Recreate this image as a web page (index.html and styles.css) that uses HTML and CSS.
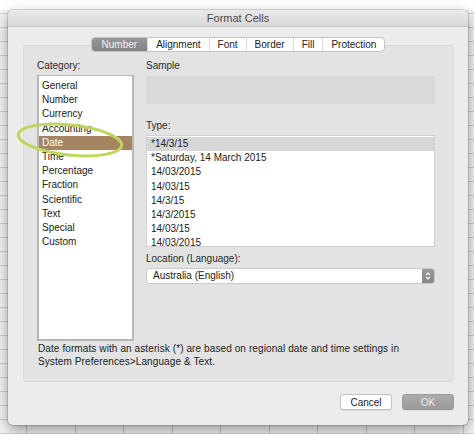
FILE: index.html
```html
<!DOCTYPE html>
<html lang="en">
<head>
  <meta charset="UTF-8" />
  <title>Format Cells</title>
  <link rel="stylesheet" href="styles.css">
</head>
<body>

  <div class="sheet">
    <div class="dialog">
      <div class="titlebar">Format Cells</div>

      <div class="tabs">
        <span class="tab active">Number</span>
        <span class="tab">Alignment</span>
        <span class="tab">Font</span>
        <span class="tab">Border</span>
        <span class="tab">Fill</span>
        <span class="tab">Protection</span>
      </div>

      <div class="group">
        <div class="columns">
          <div class="left-col">
            <div class="label">Category:</div>
            <ul class="category-list">
              <li>General</li>
              <li>Number</li>
              <li>Currency</li>
              <li>Accounting</li>
              <li class="selected">Date</li>
              <li>Time</li>
              <li>Percentage</li>
              <li>Fraction</li>
              <li>Scientific</li>
              <li>Text</li>
              <li>Special</li>
              <li>Custom</li>
            </ul>
          </div>

          <div class="right-col">
            <div class="label">Sample</div>
            <div class="sample"></div>

            <div class="label type-label">Type:</div>
            <ul class="type-list">
              <li class="selected">*14/3/15</li>
              <li>*Saturday, 14 March 2015</li>
              <li>14/03/2015</li>
              <li>14/03/15</li>
              <li>14/3/15</li>
              <li>14/3/2015</li>
              <li>14/03/15</li>
              <li>14/03/2015</li>
            </ul>

            <div class="label location-label">Location (Language):</div>
            <div class="select">
              <span class="select-value">Australia (English)</span>
              <span class="stepper">
                <svg width="6" height="10" viewBox="0 0 6 10">
                  <path d="M1 4 L3 2 L5 4 M1 6 L3 8 L5 6" fill="none" stroke="#fff" stroke-width="1.1"/>
                </svg>
              </span>
            </div>
          </div>
        </div>

        <p class="note">Date formats with an asterisk (*) are based on regional date and time settings in<br>System Preferences&gt;Language &amp; Text.</p>

        <!-- annotation ring drawn over the list -->
        <svg class="ring" width="120" height="52" viewBox="0 0 120 52">
          <ellipse cx="57" cy="25" rx="52" ry="15" transform="rotate(6 57 25)" fill="none" stroke="#bfd65c" stroke-width="3"/>
        </svg>
      </div>

      <div class="buttons">
        <button class="btn">Cancel</button>
        <button class="btn ok">OK</button>
      </div>
    </div>
  </div>

</body>
</html>
```

FILE: styles.css
```css
body {
  margin: 0;
  font-family: "Liberation Sans", Arial, sans-serif;
  font-size: 10px;
  color: #222;
  background-color: #f4f4f4;
  background-image:
    linear-gradient(#fff 0, #fff 10px, transparent 10px),
    repeating-linear-gradient(90deg, transparent 0, transparent 26px, #c4c4c4 26px, #c4c4c4 27px, transparent 27px, transparent 48.5px),
    repeating-linear-gradient(180deg, transparent 0, transparent 13px, #cfcfcf 13px, #cfcfcf 14px);
}

.sheet {
  width: 474px;
  height: 434px;
  padding: 10px 0 0 8px;
  box-sizing: border-box;
  overflow: hidden;
}

.dialog {
  width: 460px;
  height: 415px;
  background: #ececec;
  border-radius: 5px;
  box-shadow: 0 5px 14px rgba(0, 0, 0, 0.4), 0 0 0 1px rgba(0, 0, 0, 0.12);
  display: flex;
  flex-direction: column;
  overflow: hidden;
}

.titlebar {
  height: 17px;
  line-height: 17px;
  text-align: center;
  font-size: 11px;
  color: #4a4a4a;
  background: linear-gradient(#e9e9e9, #d9d9d9);
  border-bottom: 1px solid #c9c9c9;
  box-sizing: border-box;
}

.tabs {
  align-self: center;
  display: flex;
  margin-top: 10px;
  height: 15px;
  background: #fff;
  border: 1px solid #c4c4c4;
  border-radius: 4px;
  overflow: hidden;
  position: relative;
  z-index: 1;
  box-sizing: border-box;
}

.tab {
  padding: 0 8px;
  line-height: 13px;
  border-left: 1px solid #dcdcdc;
  color: #222;
}

.tab:first-child { border-left: none; }

.tab.active {
  background: linear-gradient(#979799, #838386);
  color: #f2f2f2;
  padding: 0 10px;
}

.group {
  position: relative;
  margin: -7px 14px 0 15px;
  height: 337px;
  background: #e3e3e3;
  border: 1px solid #dadada;
  border-radius: 3px;
  padding: 13px 18px 0 13px;
  box-sizing: border-box;
}

.columns {
  display: grid;
  grid-template-columns: 97px 1fr;
  gap: 12px;
}

.label {
  line-height: 13px;
  color: #2a2a2a;
}

ul {
  list-style: none;
  margin: 0;
  background: #fff;
  box-sizing: border-box;
}

li {
  height: 14.2px;
  line-height: 14.2px;
  white-space: nowrap;
}

.category-list {
  margin-top: 3px;
  height: 266px;
  padding: 3px 0 0 0;
  border: 2px solid #b7b7b7;
  border-top-width: 1px;
}

.category-list li { padding-left: 3px; }

.category-list li.selected {
  background: #a58462;
  color: #fff;
}

.sample {
  margin-top: 4px;
  height: 28px;
  background: #d9d9d9;
  border-radius: 2px;
}

.type-label { margin-top: 15px; }

.type-list {
  margin-top: 3px;
  height: 112px;
  padding: 1px 0 0 0;
  border: 1px solid #d0d0d0;
  overflow: hidden;
}

.type-list li { padding-left: 4px; }

.type-list li.selected { background: #d7d7d7; }

.location-label { margin-top: 5px; }

.select {
  margin-top: 3px;
  height: 16px;
  display: flex;
  background: #fff;
  border: 1px solid #cbcbcb;
  border-radius: 3px;
  overflow: hidden;
  box-sizing: border-box;
}

.select-value {
  flex: 1;
  padding-left: 6px;
  line-height: 14px;
}

.stepper {
  width: 12px;
  background: linear-gradient(#9a9a9a, #858585);
  display: flex;
  align-items: center;
  justify-content: center;
}

.note {
  margin: 1px 0 0 1px;
  line-height: 13px;
  letter-spacing: 0.1px;
  color: #222;
}

.ring {
  position: absolute;
  left: -11px;
  top: 69px;
}

.buttons {
  display: flex;
  justify-content: flex-end;
  gap: 10px;
  margin: 12px 14px 0 0;
}

.btn {
  width: 52px;
  height: 16px;
  padding: 0;
  font-family: inherit;
  font-size: 10px;
  color: #222;
  background: #fff;
  border: 1px solid #c2c2c2;
  border-radius: 3px;
  box-shadow: 0 1px 0 rgba(0, 0, 0, 0.08);
}

.btn.ok {
  background: linear-gradient(#acacac, #9a9a9a);
  border-color: #9a9a9a;
  color: #ececec;
}
```
